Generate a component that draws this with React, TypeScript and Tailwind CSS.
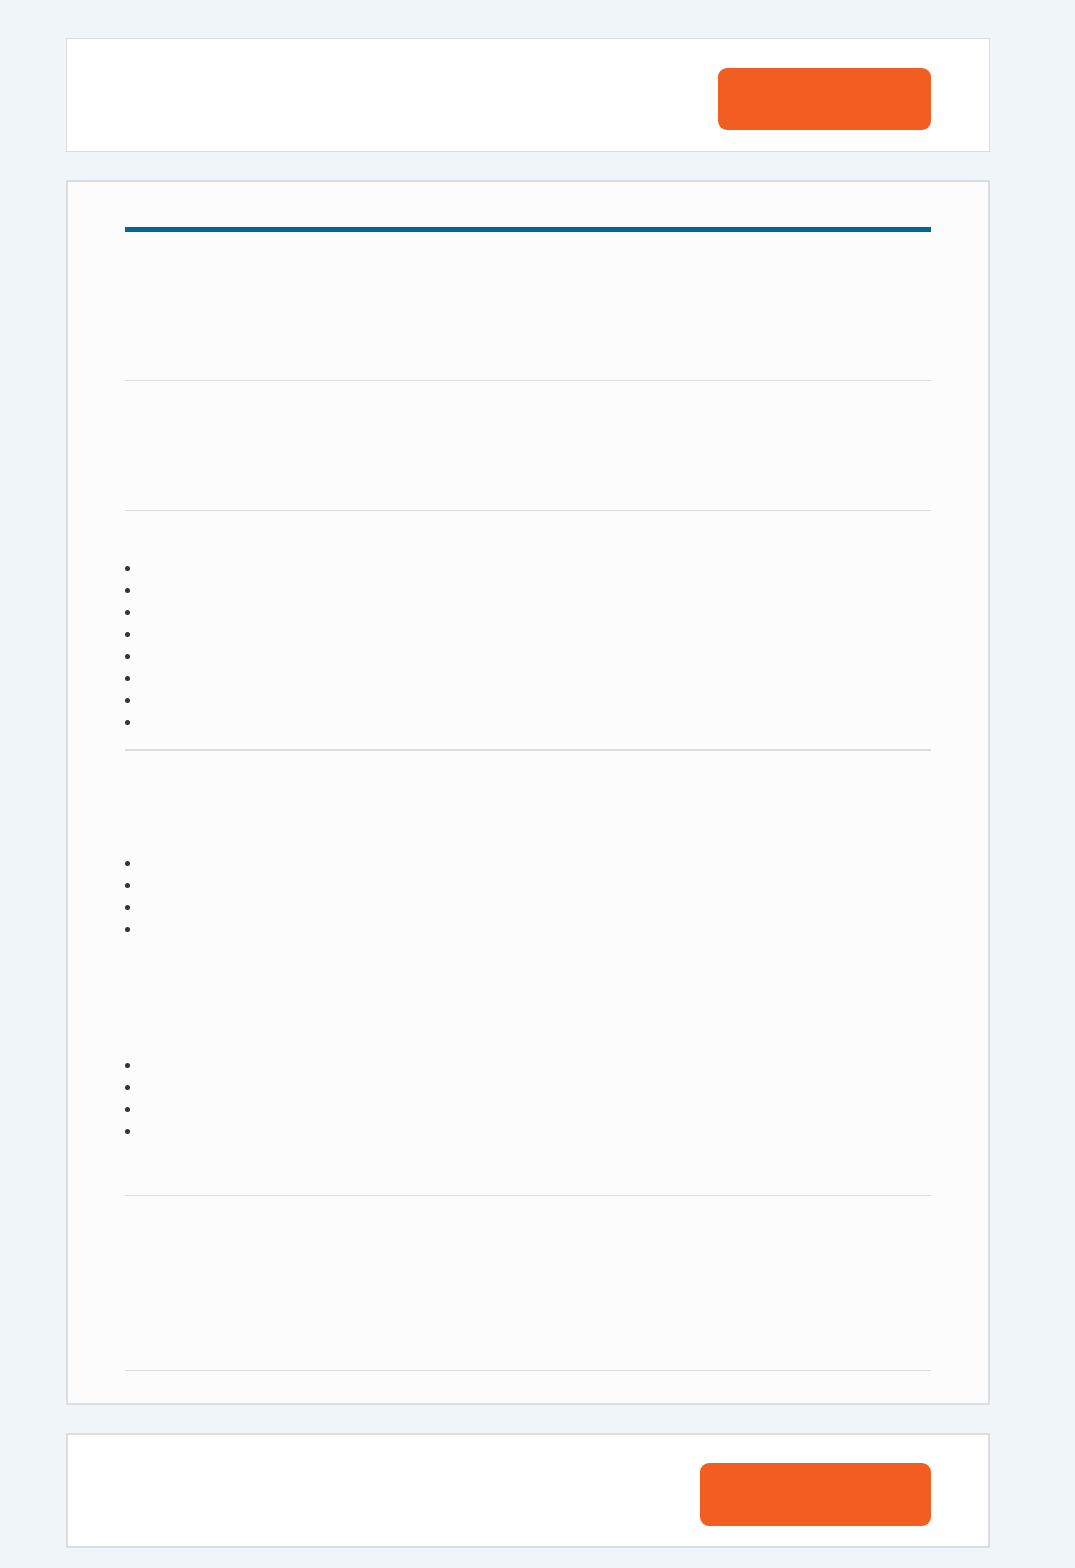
import React from "react";

function Dots({ n }: { n: number }) {
  return (
    <ul className="flex flex-col">
      {Array.from({ length: n }).map((_, i) => (
        <li key={i} className="h-[22px] flex items-center">
          <span className="ml-[57px] block w-[5px] h-[5px] rounded-full bg-[#333333]" />
        </li>
      ))}
    </ul>
  );
}

export default function App() {
  return (
    <div className="min-h-[1568px] bg-[#f0f5f9] pt-[38px] pb-[20px]" style={{ fontFamily: "'Liberation Sans', Arial, sans-serif" }}>
      <div className="ml-[66px] w-[924px] flex flex-col">
        {/* Top card */}
        <header className="h-[114px] bg-white border border-[#dcdcdc] flex items-start justify-end pr-[58px] pt-[29px]">
          <button className="w-[213px] h-[62px] rounded-[9px] bg-[#f25e22]" aria-label="" />
        </header>

        {/* Main card */}
        <main className="mt-[28px] h-[1225px] bg-[#fcfcfc] border-2 border-[#dddddd] relative">
          <div className="flex flex-col">
            <div className="h-[45px]" />
            <div className="mx-[57px] h-[5px] bg-[#00679a]" />
            <div className="h-[148px]" />
            <div className="mx-[57px] h-px bg-[#dddddd]" />
            <div className="h-[129px]" />
            <div className="mx-[57px] h-px bg-[#dddddd]" />
            <div className="h-[46px]" />
            <Dots n={8} />
            <div className="h-[16px]" />
            <div className="mx-[57px] h-[2px] bg-[#dddddd]" />
            <div className="h-[101px]" />
            <Dots n={4} />
            <div className="h-[114px]" />
            <Dots n={4} />
            <div className="h-[53px]" />
            <div className="mx-[57px] h-px bg-[#dddddd]" />
            <div className="h-[174px]" />
            <div className="mx-[57px] h-px bg-[#dddddd]" />
          </div>
        </main>

        {/* Bottom card */}
        <footer className="mt-[28px] h-[115px] bg-white border-2 border-[#dddddd] flex items-start justify-end pr-[57px] pt-[28px]">
          <button className="w-[231px] h-[63px] rounded-[9px] bg-[#f25e22]" aria-label="" />
        </footer>
      </div>
    </div>
  );
}
